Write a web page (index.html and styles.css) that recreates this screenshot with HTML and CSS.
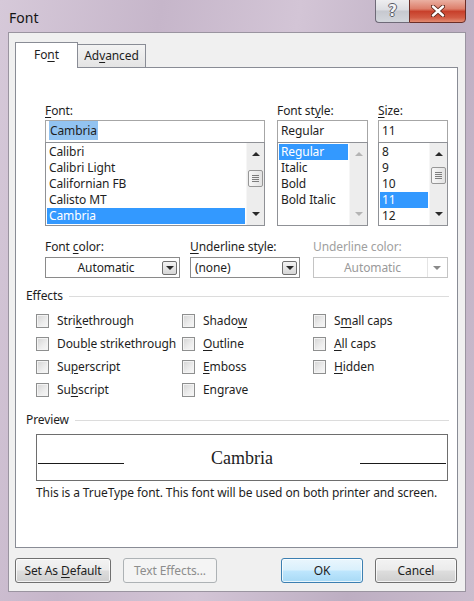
FILE: index.html
```html
<!DOCTYPE html>
<html>
<head>
<meta charset="utf-8">
<link rel="stylesheet" href="styles.css">
</head>
<body>
<div class="window">
  <div class="titlebar">
    <span class="title">Font</span>
    <div class="caption">
      <div class="cbtn help"><span>?</span></div>
      <div class="cbtn close">
        <svg width="14" height="12" viewBox="0 0 14 12">
          <path d="M2 1.5 L12 10.5 M12 1.5 L2 10.5" stroke="#5a2519" stroke-width="4.2" stroke-linecap="round"/>
          <path d="M2 1.5 L12 10.5 M12 1.5 L2 10.5" stroke="#fff" stroke-width="2.4" stroke-linecap="round"/>
        </svg>
      </div>
    </div>
  </div>
  <div class="client">
    <div class="tabs">
      <div class="tab active">Fo<u>n</u>t</div>
      <div class="tab">Ad<u>v</u>anced</div>
    </div>
    <div class="panel">
      <div class="fontrow">
        <div class="fcol col-font">
          <div class="label"><u>F</u>ont:</div>
          <div class="input"><span class="hl">Cambria</span></div>
          <div class="list">
            <div class="items">
              <div class="item">Calibri</div>
              <div class="item">Calibri Light</div>
              <div class="item">Californian FB</div>
              <div class="item">Calisto MT</div>
              <div class="item sel">Cambria</div>
            </div>
            <div class="sb">
              <div class="arr"><span class="tri-up"></span></div>
              <div class="thumb thumb-font"><span class="grip"></span></div>
              <div class="sb-fill"></div>
              <div class="arr"><span class="tri-down"></span></div>
            </div>
          </div>
        </div>
        <div class="fcol col-style">
          <div class="label">Font st<u>y</u>le:</div>
          <div class="input">Regular</div>
          <div class="list">
            <div class="items">
              <div class="item sel">Regular</div>
              <div class="item">Italic</div>
              <div class="item">Bold</div>
              <div class="item">Bold Italic</div>
            </div>
            <div class="sb sb-off">
              <div class="arr"><span class="tri-up"></span></div>
              <div class="sb-fill"></div>
              <div class="arr"><span class="tri-down"></span></div>
            </div>
          </div>
        </div>
        <div class="fcol col-size">
          <div class="label"><u>S</u>ize:</div>
          <div class="input">11</div>
          <div class="list">
            <div class="items">
              <div class="item">8</div>
              <div class="item">9</div>
              <div class="item">10</div>
              <div class="item sel">11</div>
              <div class="item">12</div>
            </div>
            <div class="sb">
              <div class="arr"><span class="tri-up"></span></div>
              <div class="thumb thumb-size"><span class="grip"></span></div>
              <div class="sb-fill"></div>
              <div class="arr"><span class="tri-down"></span></div>
            </div>
          </div>
        </div>
      </div>

      <div class="ddrow">
        <div class="ddcol dd-color">
          <div class="label">Font <u>c</u>olor:</div>
          <div class="dd">
            <span class="dd-text center">Automatic</span>
            <span class="dd-btn"><span class="tri-down"></span></span>
          </div>
        </div>
        <div class="ddcol dd-ustyle">
          <div class="label"><u>U</u>nderline style:</div>
          <div class="dd">
            <span class="dd-text">(none)</span>
            <span class="dd-btn"><span class="tri-down"></span></span>
          </div>
        </div>
        <div class="ddcol dd-ucolor">
          <div class="label disabled">Underline color:</div>
          <div class="dd dd-off">
            <span class="dd-text center">Automatic</span>
            <span class="dd-btn"><span class="tri-down"></span></span>
          </div>
        </div>
      </div>

      <div class="group"><span>Effects</span><span class="rule"></span></div>
      <div class="effects">
        <div class="cb"><span class="box"></span><span>Stri<u>k</u>ethrough</span></div>
        <div class="cb"><span class="box"></span><span>Shado<u>w</u></span></div>
        <div class="cb"><span class="box"></span><span>S<u>m</u>all caps</span></div>
        <div class="cb"><span class="box"></span><span>Doub<u>l</u>e strikethrough</span></div>
        <div class="cb"><span class="box"></span><span><u>O</u>utline</span></div>
        <div class="cb"><span class="box"></span><span><u>A</u>ll caps</span></div>
        <div class="cb"><span class="box"></span><span>Su<u>p</u>erscript</span></div>
        <div class="cb"><span class="box"></span><span><u>E</u>mboss</span></div>
        <div class="cb"><span class="box"></span><span><u>H</u>idden</span></div>
        <div class="cb"><span class="box"></span><span>Su<u>b</u>script</span></div>
        <div class="cb"><span class="box"></span><span>Engrave</span></div>
      </div>

      <div class="group group-preview"><span>Preview</span><span class="rule"></span></div>
      <div class="preview">
        <span class="pline"></span>
        <span class="ptext">Cambria</span>
        <span class="pline"></span>
      </div>
      <div class="note">This is a TrueType font. This font will be used on both printer and screen.</div>
    </div>

    <div class="buttons">
      <div class="btn b-default"><span>Set As <u>D</u>efault</span></div>
      <div class="btn b-effects disabled"><span>Text Effects...</span></div>
      <div class="btn b-ok primary"><span>OK</span></div>
      <div class="btn b-cancel"><span>Cancel</span></div>
    </div>
  </div>
</div>
</body>
</html>
```

FILE: styles.css
```css
* { box-sizing: border-box; margin: 0; padding: 0; }
html, body { width: 474px; height: 601px; overflow: hidden; }
body {
  font-family: "Noto Sans", "Segoe UI", sans-serif;
  font-size: 12px;
  letter-spacing: -0.1px;
  color: #1e1e1e;
  background: #c9bccd;
}
u { text-decoration: underline; text-underline-offset: 2px; }

.window {
  width: 474px;
  height: 601px;
  display: flex;
  flex-direction: column;
  padding: 0 8px 9px 8px;
  background: linear-gradient(100deg, #d6c9d9 0%, #c6b6ca 28%, #d3c5d6 52%, #bdaec2 78%, #cbbdce 100%);
}

/* title bar */
.titlebar {
  height: 32px;
  flex: none;
  display: flex;
  justify-content: space-between;
  align-items: flex-start;
}
.title {
  font-size: 14px;
  line-height: 18px;
  margin-top: 9px;
  margin-left: 1px;
  color: #141414;
  letter-spacing: 0;
}
.caption {
  display: flex;
  margin-top: -1px;
  height: 24px;
}
.cbtn {
  height: 24px;
  display: flex;
  align-items: center;
  justify-content: center;
  border: 1px solid #6f6a78;
}
.help {
  width: 34px;
  border-right: none;
  border-radius: 0 0 0 4px;
  background: linear-gradient(#eeeef0 0%, #dcdde2 45%, #c6c8cf 50%, #d3d6dc 100%);
}
.help span {
  font-family: "DejaVu Sans", sans-serif;
  font-weight: bold;
  font-size: 15px;
  line-height: 15px;
  color: #f4f4f6;
  text-shadow: 1px 0 0 #5a5c66, -1px 0 0 #5a5c66, 0 1px 0 #5a5c66, 0 -1px 0 #5a5c66;
  margin-top: 1px;
}
.close {
  width: 57px;
  border-color: #6b2e27;
  border-radius: 0 0 4px 0;
  background: linear-gradient(#eab0a2 0%, #dd7f6b 40%, #c8402b 52%, #d25b44 80%, #e38c72 100%);
}

/* client area */
.client {
  flex: 1;
  background: #f0f0f0;
  border: 1px solid #9a94a0;
  padding: 9px 8px 0 6px;
  display: flex;
  flex-direction: column;
}

.tabs {
  display: flex;
  align-items: flex-end;
  height: 25px;
  position: relative;
  z-index: 2;
}
.tab {
  height: 23px;
  width: 69px;
  border: 1px solid #898c95;
  border-bottom: none;
  background: linear-gradient(#f3f3f3, #e4e4e4);
  text-align: center;
  line-height: 21px;
  margin-left: -1px;
}
.tab.active {
  width: 63px;
  height: 26px;
  margin-left: 0;
  margin-bottom: -1px;
  background: #fff;
  line-height: 24px;
  z-index: 3;
  position: relative;
}

.panel {
  width: 443px;
  height: 481px;
  border: 1px solid #898c95;
  background: #fff;
  display: flex;
  flex-direction: column;
}

.label { line-height: 15px; height: 15px; white-space: nowrap; }
.label.disabled { color: #a0a0a0; }

/* font lists */
.fontrow {
  display: flex;
  margin: 35px 0 0 29px;
}
.fcol { display: flex; flex-direction: column; }
.col-font { width: 220px; }
.col-style { width: 91px; margin-left: 12px; }
.col-size { width: 70px; margin-left: 10px; }
.fcol .label { margin-bottom: 2px; }
.input {
  height: 22px;
  border: 1px solid #a6a6a6;
  border-bottom: none;
  padding: 0 3px;
  line-height: 20px;
  white-space: nowrap;
}
.hl { background: #92c3f1; padding: 1px 1px; }
.list {
  height: 84px;
  border: 1px solid #8f9196;
  display: flex;
  overflow: hidden;
}
.items { flex: 1; padding: 1px 1px 0 1px; min-width: 0; }
.item {
  height: 16px;
  line-height: 16px;
  padding-left: 2px;
  white-space: nowrap;
}
.item.sel { background: #3399ff; color: #fff; }
.sb {
  width: 18px;
  flex: none;
  background: #ededed;
  border-left: 1px solid #f6f6f6;
  display: flex;
  flex-direction: column;
  align-items: center;
}
.sb-fill { flex: 1; }
.arr {
  height: 22px;
  width: 100%;
  display: flex;
  align-items: center;
  justify-content: center;
}
.tri-up {
  width: 0; height: 0;
  border-left: 4px solid transparent;
  border-right: 4px solid transparent;
  border-bottom: 4px solid #2a2a2a;
}
.tri-down {
  width: 0; height: 0;
  border-left: 4px solid transparent;
  border-right: 4px solid transparent;
  border-top: 4px solid #2a2a2a;
}
.sb-off .tri-up { border-bottom-color: #b4b4b4; }
.sb-off .tri-down { border-top-color: #b4b4b4; }
.thumb {
  width: 15px;
  height: 17px;
  border: 1px solid #979797;
  border-radius: 2px;
  background: linear-gradient(to right, #f7f7f7, #e3e3e3);
  display: flex;
  align-items: center;
  justify-content: center;
}
.thumb-font { margin-top: 5px; }
.thumb-size { margin-top: 2px; }
.grip {
  width: 7px;
  height: 7px;
  background: repeating-linear-gradient(#7d7d7d 0 1px, transparent 1px 2px);
}

/* dropdown row */
.ddrow {
  display: flex;
  margin: 13px 0 0 29px;
}
.ddcol { display: flex; flex-direction: column; }
.ddcol .label { margin-bottom: 3px; }
.dd-color { width: 135px; }
.dd-ustyle { width: 110px; margin-left: 10px; }
.dd-ucolor { width: 135px; margin-left: 13px; }
.dd {
  height: 21px;
  border: 1px solid #8a8a8a;
  display: flex;
  align-items: center;
  padding: 0 2px 0 4px;
  background: #fff;
}
.dd-text { flex: 1; white-space: nowrap; line-height: 19px; }
.dd-text.center { text-align: center; }
.dd-btn {
  width: 15px;
  height: 14px;
  border: 1px solid #707070;
  border-radius: 2px;
  background: linear-gradient(#f4f4f4, #d7d7d7);
  display: flex;
  align-items: center;
  justify-content: center;
}
.dd-off { border-color: #c4c4c4; }
.dd-off .dd-text { color: #9a9a9a; }
.dd-off .dd-btn {
  border: none;
  border-left: 1px solid #e4e4e4;
  border-radius: 0;
  background: none;
  height: 19px;
  width: 18px;
}
.dd-off .tri-down { border-top-color: #8a8a8a; }

/* group headings */
.group {
  display: flex;
  align-items: center;
  margin: 10px 8px 0 10px;
  line-height: 15px;
}
.group .rule {
  flex: 1;
  height: 1px;
  background: #dcdcdc;
  margin-left: 6px;
  margin-top: 1px;
}
.group-preview { margin-top: 11px; }

/* effects */
.effects {
  display: grid;
  grid-template-columns: 146px 131px 1fr;
  grid-auto-rows: 23px;
  margin: 6px 0 0 20px;
}
.cb {
  display: flex;
  align-items: center;
  white-space: nowrap;
}
.box {
  width: 13px;
  height: 14px;
  border: 1px solid #8e8f8f;
  background: linear-gradient(135deg, #d4d4d4 0%, #ededed 60%, #f7f7f7 100%);
  box-shadow: inset 0 0 0 1px #f3f3f3;
  margin-right: 8px;
  flex: none;
}

/* preview */
.preview {
  margin: 7px 0 0 20px;
  width: 412px;
  height: 47px;
  border: 1px solid #6e6e6e;
  display: flex;
  justify-content: space-between;
  align-items: flex-end;
  padding: 0 1px 12px 1px;
}
.pline {
  width: 86px;
  height: 1px;
  background: #1a1a1a;
  margin-bottom: 4px;
}
.ptext {
  font-family: "Liberation Serif", "Times New Roman", serif;
  font-size: 18px;
  line-height: 20px;
  color: #222;
  letter-spacing: 0;
}
.note {
  margin: 4px 0 0 20px;
  line-height: 15px;
  white-space: nowrap;
}

/* buttons */
.buttons {
  display: flex;
  margin-top: 10px;
  height: 25px;
}
.btn {
  height: 25px;
  border: 1px solid #707070;
  border-radius: 3px;
  background: linear-gradient(#f3f3f3 0%, #ebebeb 48%, #dddddd 52%, #cfcfcf 100%);
  box-shadow: inset 0 0 0 1px rgba(255,255,255,0.75);
  display: flex;
  align-items: center;
  justify-content: center;
  white-space: nowrap;
}
.b-default { width: 96px; }
.b-effects { width: 94px; margin-left: 12px; }
.b-ok { width: 82px; margin-left: auto; }
.b-cancel { width: 82px; margin-left: 12px; }
.btn.disabled {
  border-color: #adb2b5;
  background: #f4f4f4;
  color: #8d8d8d;
  box-shadow: none;
}
.btn.primary {
  border-color: #3c7fb1;
  background: linear-gradient(#eaf6fd 0%, #d9f0fc 48%, #bee6fd 52%, #a7d9f5 100%);
}
```
